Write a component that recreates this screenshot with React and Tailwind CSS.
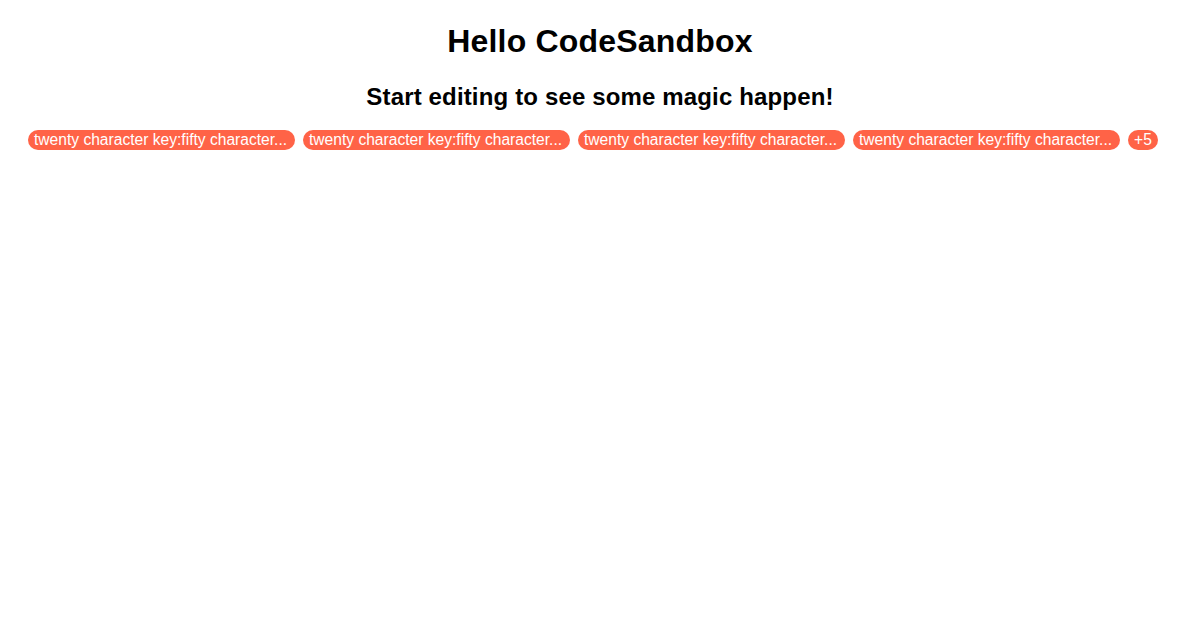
export default function App() {
  const chips = Array.from({ length: 4 });
  return (
    <div className="text-center text-black" style={{ fontFamily: '"Liberation Sans", Arial, sans-serif' }}>
      <h1 className="text-[32px] font-bold leading-[36.8px] pt-[22.5px] tracking-[0.2px]">Hello CodeSandbox</h1>
      <h2 className="text-[24px] font-bold leading-[27.6px] mt-[23.5px] tracking-[0.15px]">Start editing to see some magic happen!</h2>
      <div className="flex flex-wrap mt-[20px] pl-[28px] gap-x-[8px]">
        {chips.map((_, i) => (
          <span
            key={i}
            className="block w-[267px] h-[20px] leading-[20px] px-[6px] rounded-full bg-[#ff6347] text-white text-[15.6px] whitespace-nowrap overflow-hidden text-left"
          >
            twenty character key:fifty character...
          </span>
        ))}
        <span className="block w-[30px] h-[20px] leading-[20px] rounded-full bg-[#ff6347] text-white text-[15.6px] text-center">+5</span>
      </div>
    </div>
  );
}
